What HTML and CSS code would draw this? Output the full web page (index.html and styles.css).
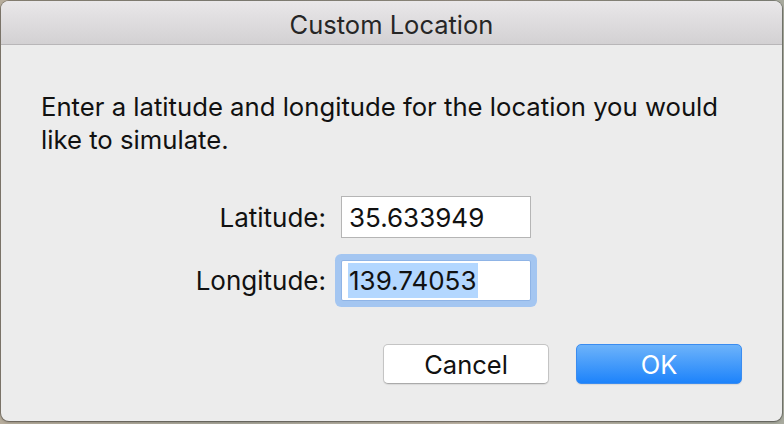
FILE: index.html
```html
<!DOCTYPE html>
<html lang="en">
<head>
  <meta charset="UTF-8" />
  <title>Custom Location</title>
  <link rel="stylesheet" href="styles.css">
</head>
<body>
  <div class="window">
    <div class="titlebar">Custom Location</div>
    <div class="content">
      <p class="intro">Enter a latitude and longitude for the location you would like to simulate.</p>
      <form class="fields" onsubmit="return false;">
        <label for="lat">Latitude:</label>
        <input id="lat" type="text" value="35.633949">
        <label for="lng">Longitude:</label>
        <div class="focus-ring"><span class="selected">139.74053</span></div>
      </form>
      <div class="buttons">
        <button class="btn">Cancel</button>
        <button class="btn primary">OK</button>
      </div>
    </div>
  </div>
</body>
</html>
```

FILE: styles.css
```css
html, body { margin: 0; height: 100%; }
body { background: linear-gradient(90deg, #b7ad9c, #a9a79b 30%, #c2b8a8 60%, #a8aa9e); padding: 1px 2px 0 1px; box-sizing: border-box; font-family: Inter, Roboto, sans-serif; color: #111; overflow: hidden; }
.window { height: 420px; background: #ececec; border-radius: 8px; box-shadow: 0 0 0 1px rgba(0,0,0,0.25), 0 1px 3px rgba(0,0,0,0.3); overflow: hidden; }
.titlebar { height: 43px; border-bottom: 1px solid #b8b6b8; background: linear-gradient(#e9e7e9, #d3d1d3); text-align: center; line-height: 47px; font-size: 25.5px; color: #262626; }
.content { padding: 45px 40px 0 40px; }
.intro { margin: 0; font-size: 25.7px; line-height: 33px; width: 700px; }
.fields { display: grid; grid-template-columns: 285px 190px; column-gap: 15px; row-gap: 22px; align-items: center; margin-top: 40px; }
.fields label { text-align: right; font-size: 26px; }
.fields input, .focus-ring { box-sizing: border-box; width: 190px; height: 42px; border: 1px solid #b5b5b5; background: #fff; font: inherit; font-size: 26px; color: #111; padding: 0 7px; margin: 0; outline: none; }
.focus-ring { display: flex; align-items: center; border-color: #8fb4e6; border-radius: 2px; box-shadow: 0 0 0 6px #a4c6f1; height: 41px; padding: 0 6px; }
.selected { background: #b3d7ff; line-height: 35px; padding: 0 1px; }
.buttons { display: flex; justify-content: flex-end; gap: 27px; margin-top: 43px; }
.btn { width: 166px; height: 40px; border-radius: 5px; border: 1px solid #c4c4c4; border-bottom-color: #aaa; background: #fff; font: inherit; font-size: 25.5px; color: #111; box-shadow: 0 1px 1px rgba(0,0,0,0.08); }
.btn.primary { border: 1px solid #3a8cf0; background: linear-gradient(#6db3fa, #1d83fb); color: #fff; }
```
